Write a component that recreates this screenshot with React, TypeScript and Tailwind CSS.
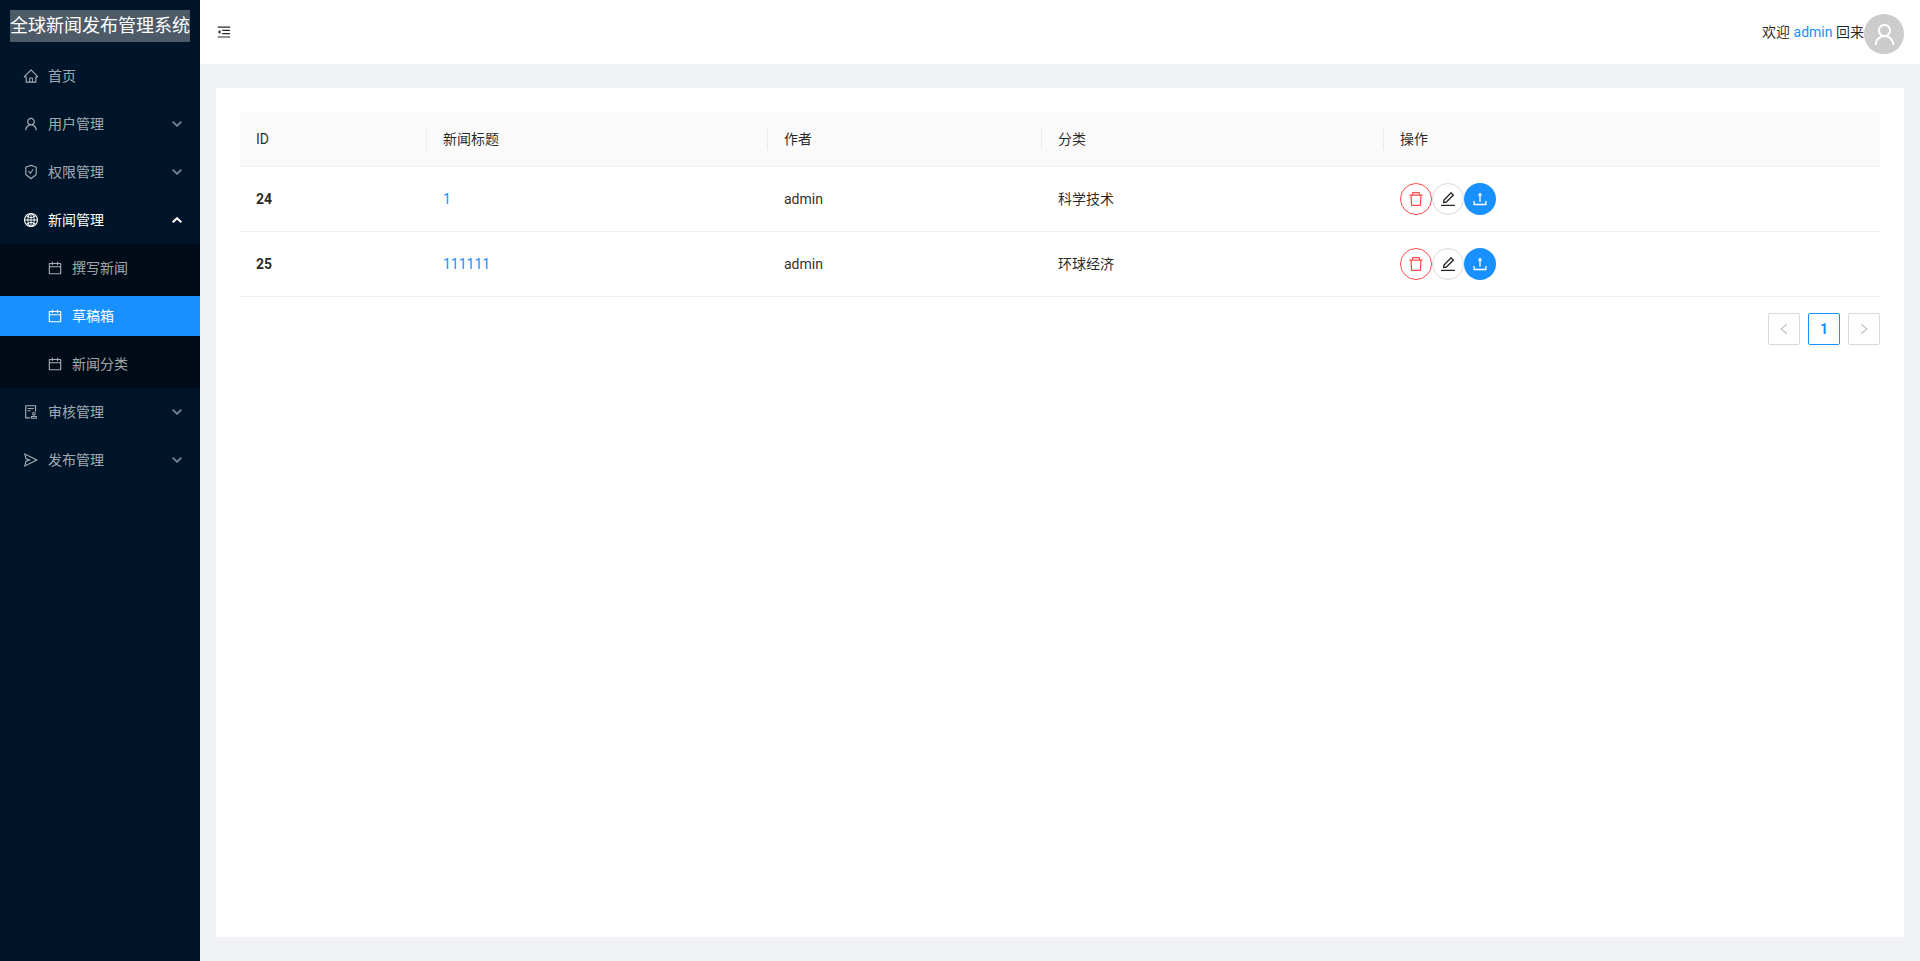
import type { ReactNode } from "react"
import {
  AiOutlineAudit,
  AiOutlineCalendar,
  AiOutlineDelete,
  AiOutlineEdit,
  AiOutlineGlobal,
  AiOutlineHome,
  AiOutlineLeft,
  AiOutlineMenuFold,
  AiOutlineRight,
  AiOutlineSafetyCertificate,
  AiOutlineSend,
  AiOutlineUpload,
  AiOutlineUser,
} from "react-icons/ai"

const drafts = [
  { id: 24, title: "1", author: "admin", category: "科学技术" },
  { id: 25, title: "111111", author: "admin", category: "环球经济" },
]

const Chevron = ({ up }: { up?: boolean }) => (
  <svg width="10" height="6" viewBox="0 0 10 6" fill="none" stroke="currentColor" strokeWidth={up ? 2 : 1.6} className={up ? "text-white" : "text-[#ffffff80]"}>
    <polyline points={up ? "0.7,5.3 5,1.2 9.3,5.3" : "0.7,0.7 5,4.8 9.3,0.7"} />
  </svg>
)

const MenuItem = ({ icon, label, arrow, open }: { icon: ReactNode; label: string; arrow?: boolean; open?: boolean }) => (
  <div className={`mt-1 flex h-10 items-center pr-[18px] pl-6 ${open ? "mb-1 text-white" : "mb-2 text-[#ffffffa6]"}`}>
    <span className="mr-[9px] -ml-px text-base">{icon}</span>
    <span className="flex-1">{label}</span>
    {arrow && <Chevron up={open} />}
  </div>
)

const SubItem = ({ label, active }: { label: string; active?: boolean }) => (
  <div className={`mb-2 flex h-10 items-center pl-12 last:mb-0 ${active ? "bg-[#1890ff] text-white" : "text-[#ffffffa6]"}`}>
    <AiOutlineCalendar className="mr-[9px] -ml-px text-base" />
    <span>{label}</span>
  </div>
)

const Sidebar = () => (
  <aside className="w-[200px] shrink-0 bg-[#001529]">
    <div className="mx-[10px] mt-[10px] mb-[14px] h-8 bg-[#ffffff4d] text-center text-lg leading-8 whitespace-nowrap text-white">全球新闻发布管理系统</div>
    <MenuItem icon={<AiOutlineHome />} label="首页" />
    <MenuItem icon={<AiOutlineUser />} label="用户管理" arrow />
    <MenuItem icon={<AiOutlineSafetyCertificate />} label="权限管理" arrow />
    <MenuItem icon={<AiOutlineGlobal />} label="新闻管理" arrow open />
    <div className="bg-[#000c17] py-1">
      <SubItem label="撰写新闻" />
      <SubItem label="草稿箱" active />
      <SubItem label="新闻分类" />
    </div>
    <MenuItem icon={<AiOutlineAudit />} label="审核管理" arrow />
    <MenuItem icon={<AiOutlineSend />} label="发布管理" arrow />
  </aside>
)

const App = () => {
  return (
    <div className="flex h-[961px] overflow-hidden bg-[#f0f2f5] font-['Roboto','Noto_Sans_CJK_SC',sans-serif] text-sm text-[#000000d9]">
      <Sidebar />
      <div className="flex flex-1 flex-col">
        <header className="flex h-16 shrink-0 items-center justify-between bg-white px-4">
          <AiOutlineMenuFold className="text-base" />
          <div className="flex items-center">
            <span>欢迎 <span className="text-[#1890ff]">admin</span> 回来</span>
            <div className="mt-1 flex h-10 w-10 items-center justify-center rounded-full bg-[#ccc] text-[27px] text-white">
              <AiOutlineUser />
            </div>
          </div>
        </header>

        <main className="mx-4 mt-6 mb-6 flex-1 bg-white p-6">
          <table className="w-full table-fixed border-separate border-spacing-0">
            <colgroup>
              <col className="w-[187px]" />
              <col className="w-[341px]" />
              <col className="w-[274px]" />
              <col className="w-[342px]" />
              <col />
            </colgroup>
            <thead>
              <tr className="h-[55px] text-left">
                {["ID", "新闻标题", "作者", "分类", "操作"].map((name, i) => (
                  <th key={name} className="relative border-b border-[#f0f0f0] bg-[#fafafa] px-4 font-normal">
                    {name}
                    {i < 4 && <span className="absolute top-1/2 right-0 h-[22px] w-px -translate-y-1/2 bg-[#0000000f]" />}
                  </th>
                ))}
              </tr>
            </thead>
            <tbody>
              {drafts.map((draft) => (
                <tr key={draft.id} className="h-[65px]">
                  <td className="border-b border-[#f0f0f0] px-4 font-bold">{draft.id}</td>
                  <td className="border-b border-[#f0f0f0] px-4 text-[#1890ff]">{draft.title}</td>
                  <td className="border-b border-[#f0f0f0] px-4">{draft.author}</td>
                  <td className="border-b border-[#f0f0f0] px-4">{draft.category}</td>
                  <td className="border-b border-[#f0f0f0] px-4">
                    <div className="flex">
                      <button className="flex h-8 w-8 items-center justify-center rounded-full border border-[#ff4d4f] bg-white text-lg text-[#ff4d4f]"><AiOutlineDelete /></button>
                      <button className="flex h-8 w-8 items-center justify-center rounded-full border border-[#d9d9d9] bg-white text-lg"><AiOutlineEdit /></button>
                      <button className="flex h-8 w-8 items-center justify-center rounded-full bg-[#1890ff] text-lg text-white"><AiOutlineUpload /></button>
                    </div>
                  </td>
                </tr>
              ))}
            </tbody>
          </table>

          <div className="mt-4 flex justify-end gap-2">
            <div className="flex h-8 w-8 items-center justify-center rounded-[2px] border border-[#d9d9d9] text-sm text-[#00000040]"><AiOutlineLeft /></div>
            <div className="flex h-8 w-8 items-center justify-center rounded-[2px] border border-[#1890ff] font-bold text-[#1890ff]">1</div>
            <div className="flex h-8 w-8 items-center justify-center rounded-[2px] border border-[#d9d9d9] text-sm text-[#00000040]"><AiOutlineRight /></div>
          </div>
        </main>
      </div>
    </div>
  )
}

export default App
